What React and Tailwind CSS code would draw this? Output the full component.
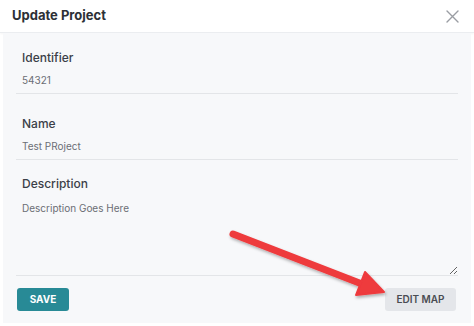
import React from 'react';

const Field = ({ label, value, className = '' }) => (
  <div className={className}>
    <label className="block pl-[6px] text-[12px] leading-[16px] font-medium text-[#3b3f48]">{label}</label>
    <input
      defaultValue={value}
      className="mt-[7px] block w-full bg-transparent pl-[6px] pb-[6px] text-[10px] leading-[14px] text-[#6b6e75] border-b border-[#e3e5e8] outline-none"
    />
  </div>
);

const Arrow = () => (
  <svg className="absolute left-0 top-0 pointer-events-none" width="474" height="326" viewBox="0 0 474 326">
    <defs>
      <filter id="sh" x="-20%" y="-20%" width="140%" height="140%">
        <feDropShadow dx="1" dy="2" stdDeviation="1.5" floodColor="#000" floodOpacity="0.3" />
      </filter>
    </defs>
    <g filter="url(#sh)">
      <line x1="233" y1="234" x2="362" y2="284" stroke="#ee3a3d" strokeWidth="7" strokeLinecap="round" />
      <polygon points="384,292 356,295 365,272" fill="#ee3a3d" stroke="#ee3a3d" strokeWidth="2" strokeLinejoin="round" />
    </g>
  </svg>
);

export default function App() {
  return (
    <div className="relative w-[474px] h-[326px] bg-white overflow-hidden" style={{ fontFamily: 'Inter, "Noto Sans", sans-serif' }}>
      <div className="flex items-center justify-between h-[33px] pl-[12px] pr-[15px] border-b border-[#ebedf0] shadow-[0_1px_2px_rgba(0,0,0,0.04)]">
        <h2 className="text-[13px] font-bold text-[#2c3036]">Update Project</h2>
        <svg width="13" height="13" viewBox="0 0 13 13" className="mt-[1px]">
          <path d="M1 1 L12 12 M12 1 L1 12" stroke="#9a9da3" strokeWidth="1.4" strokeLinecap="round" />
        </svg>
      </div>

      <div className="mx-[3px] h-[290px] bg-[#f7f8fa] px-[13px] pt-[17px]">
        <Field label="Identifier" value="54321" />
        <Field label="Name" value="Test PRoject" className="mt-[22px]" />
        <div className="mt-[16px]">
          <label className="block pl-[6px] text-[12px] leading-[16px] font-medium text-[#3b3f48]">Description</label>
          <textarea
            defaultValue="Description Goes Here"
            className="mt-[9px] block w-full h-[75px] bg-transparent pl-[6px] text-[10px] leading-[14px] text-[#6b6e75] border-b border-[#e3e5e8] outline-none resize-y"
          />
        </div>
        <div className="flex items-center justify-between mt-[12px] pl-[1px] pr-[2px]">
          <button className="w-[52px] h-[23px] rounded-[3px] bg-[#288a96] text-white text-[10px] font-bold">SAVE</button>
          <button className="w-[71px] h-[23px] rounded-[3px] bg-[#e4e6ea] text-[#4a4d53] text-[10px] font-semibold">EDIT MAP</button>
        </div>
      </div>

      <Arrow />
    </div>
  );
}
